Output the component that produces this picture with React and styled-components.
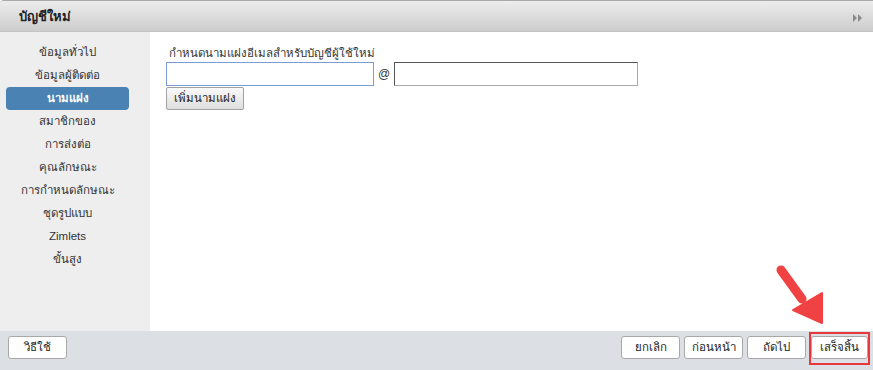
import React from "react";
import { styled, createGlobalStyle } from "styled-components";

const GlobalStyle = createGlobalStyle`
    html, body {
        margin: 0;
        padding: 0;
        background: #ffffff;
    }
    body {
        font-family: Tahoma, "Liberation Sans", "Noto Sans", "DejaVu Sans", sans-serif;
        font-size: 12px;
        color: #222;
    }
`;

const navItems = [
    "ข้อมูลทั่วไป",
    "ข้อมูลผู้ติดต่อ",
    "นามแฝง",
    "สมาชิกของ",
    "การส่งต่อ",
    "คุณลักษณะ",
    "การกำหนดลักษณะ",
    "ชุดรูปแบบ",
    "Zimlets",
    "ขั้นสูง",
];

function App() {
    return (
        <>
            <GlobalStyle />
            <Dialog>
                <TitleBar>
                    <Title>บัญชีใหม่</Title>
                    <Collapse>
                        <svg width="10" height="8" viewBox="0 0 10 8">
                            <path d="M0 0 L4 4 L0 8 Z M5 0 L9 4 L5 8 Z" fill="#8a8a8a" />
                        </svg>
                    </Collapse>
                </TitleBar>
                <Body>
                    <Sidebar>
                        {navItems.map((item) => (
                            <NavItem key={item} $active={item === "นามแฝง"}>
                                {item}
                            </NavItem>
                        ))}
                    </Sidebar>
                    <Content>
                        <FieldLabel>กำหนดนามแฝงอีเมลสำหรับบัญชีผู้ใช้ใหม่</FieldLabel>
                        <InputRow>
                            <TextInput $width={208} $focused />
                            <At>@</At>
                            <TextInput $width={244} />
                        </InputRow>
                        <AddButton>เพิ่มนามแฝง</AddButton>
                    </Content>
                </Body>
                <Footer>
                    <FooterButton>วิธีใช้</FooterButton>
                    <ButtonGroup>
                        <FooterButton>ยกเลิก</FooterButton>
                        <FooterButton>ก่อนหน้า</FooterButton>
                        <FooterButton>ถัดไป</FooterButton>
                        <Highlight>
                            <FooterButton $narrow>เสร็จสิ้น</FooterButton>
                        </Highlight>
                    </ButtonGroup>
                </Footer>
                <Arrow width="60" height="70" viewBox="0 0 60 70">
                    <path d="M5 5 L26 34" stroke="#f04242" strokeWidth="9" strokeLinecap="round" />
                    <path d="M17 45 L46 28 L46 58 Z" fill="#f04242" stroke="#f04242" strokeWidth="2" strokeLinejoin="round" />
                </Arrow>
            </Dialog>
        </>
    );
}

const Dialog = styled.div`
    position: relative;
    width: 873px;
    height: 370px;
    display: flex;
    flex-direction: column;
    overflow: hidden;
    border-top: 1px solid #a8a8a8;
    border-radius: 4px 0 0 0;
    box-sizing: border-box;
`;

const TitleBar = styled.div`
    height: 30px;
    flex-shrink: 0;
    display: flex;
    align-items: center;
    justify-content: space-between;
    padding: 0 10px 0 19px;
    background: linear-gradient(#ececec, #cdcdcd);
    border-bottom: 1px solid #c4c4c4;
`;

const Title = styled.span`
    font-weight: bold;
    font-size: 13px;
    color: #222;
`;

const Collapse = styled.span`
    display: flex;
    align-items: center;
    margin-top: 3px;
`;

const Body = styled.div`
    flex: 1;
    display: flex;
    min-height: 0;
`;

const Sidebar = styled.div`
    width: 150px;
    flex-shrink: 0;
    background: #eeeeee;
    padding: 9px 0 0 6px;
    box-sizing: border-box;
    display: flex;
    flex-direction: column;
`;

const NavItem = styled.div`
    width: 123px;
    height: 23px;
    line-height: 23px;
    text-align: center;
    font-size: 11.5px;
    border-radius: 4px;
    color: ${(p) => (p.$active ? "#ffffff" : "#333")};
    background: ${(p) => (p.$active ? "#4a82b3" : "transparent")};
    font-weight: ${(p) => (p.$active ? "bold" : "normal")};
`;

const Content = styled.div`
    flex: 1;
    background: #ffffff;
    padding: 13px 0 0 16px;
    display: flex;
    flex-direction: column;
    align-items: flex-start;
`;

const FieldLabel = styled.div`
    font-size: 11.5px;
    color: #333;
    padding-left: 3px;
    line-height: 17px;
`;

const InputRow = styled.div`
    display: flex;
    align-items: center;
    gap: 4px;
`;

const TextInput = styled.div`
    width: ${(p) => p.$width}px;
    height: 24px;
    box-sizing: border-box;
    background: #fff;
    border: 1px solid ${(p) => (p.$focused ? "#7a9cd3" : "#a9a9a9")};
    border-top-color: ${(p) => (p.$focused ? "#7a9cd3" : "#555")};
    border-left-color: ${(p) => (p.$focused ? "#7a9cd3" : "#555")};
`;

const At = styled.span`
    font-size: 12px;
    color: #333;
`;

const AddButton = styled.div`
    margin-top: 1px;
    height: 23px;
    line-height: 21px;
    padding: 0 7px;
    box-sizing: border-box;
    font-size: 11.5px;
    border: 1px solid #a0a0a0;
    border-radius: 2px;
    background: linear-gradient(#fafafa, #dedede);
    color: #222;
`;

const Footer = styled.div`
    height: 39px;
    flex-shrink: 0;
    display: flex;
    align-items: flex-start;
    justify-content: space-between;
    padding: 5px 3px 0 8px;
    box-sizing: border-box;
    background: #dcdfe4;
`;

const ButtonGroup = styled.div`
    display: flex;
    align-items: flex-start;
    gap: 4px;
`;

const FooterButton = styled.div`
    width: ${(p) => (p.$narrow ? 57 : 59)}px;
    height: 23px;
    line-height: 21px;
    box-sizing: border-box;
    text-align: center;
    font-size: 11.5px;
    color: #222;
    background: #ffffff;
    border: 1px solid #a8a8a8;
    border-radius: 3px;
`;

const Highlight = styled.div`
    margin: -4px 0 0 -1px;
    padding: 2px 0 4px 0;
    border: 2px solid #e8383d;
`;

const Arrow = styled.svg`
    position: absolute;
    left: 776px;
    top: 264px;
`;

export default App;
